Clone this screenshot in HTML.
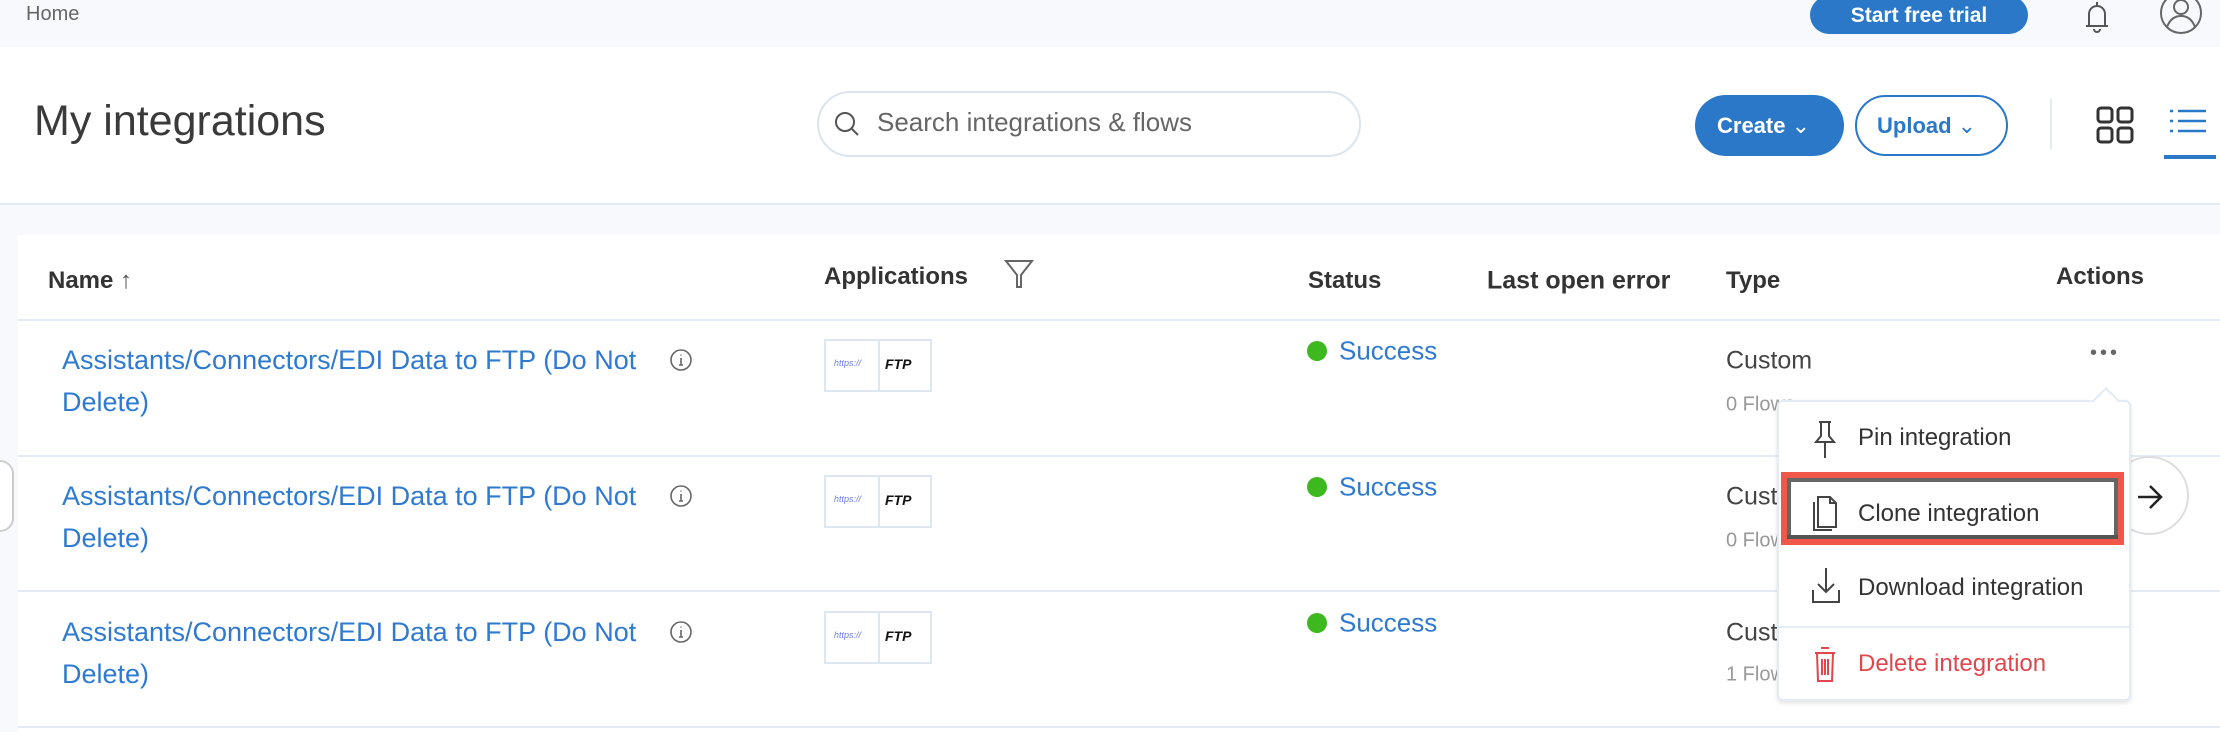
<!DOCTYPE html>
<html><head><meta charset="utf-8"><style>
*{margin:0;padding:0;box-sizing:border-box}
body{width:2220px;height:732px;overflow:hidden;background:#f7f9fc;font-family:"Liberation Sans",sans-serif;position:relative;color:#333}
.a{position:absolute;white-space:nowrap}
.hdr{font-weight:bold;font-size:24px;color:#333;transform:translateY(-50%)}
.link{color:#2f7ad0;font-size:27px;line-height:42px}
.succ{font-size:26px;color:#2f7ad0;transform:translateY(-50%)}
.dot{width:20px;height:20px;border-radius:50%;background:#3db81e}
.gray{color:#999;font-size:20px;transform:translateY(-50%)}
.cust{font-size:25px;color:#444;transform:translateY(-50%)}
.line{position:absolute;left:18px;right:0;height:2px;background:#e3ebf4}
.logo{position:absolute;width:108px;height:53px;border:2px solid #dde7f1;background:#fff}
.logo i{position:absolute;left:52px;top:0;bottom:0;width:2px;background:#dde7f1}
.logo b{position:absolute;left:59px;top:15px;font-size:14px;font-style:italic;font-weight:bold;color:#111}
.logo s{position:absolute;left:8px;top:17px;font-size:9px;font-style:italic;color:#6a7ff0;text-decoration:none}
.mi{font-size:24px;color:#333;transform:translateY(-50%)}
</style></head><body>
<div class="a" style="left:0;top:0;width:2220px;height:47px;background:#f7f9fc"></div>
<div class="a" style="left:26px;top:3px;font-size:20px;color:#666">Home</div>
<div class="a" style="left:1810px;top:-4px;width:218px;height:38px;border-radius:19px;background:#2c78c8;color:#fff;font-weight:bold;font-size:21px;text-align:center;line-height:34px;padding-top:3px">Start free trial</div>
<svg class="a" style="left:2080px;top:0" width="34" height="34" viewBox="0 0 34 34" fill="none" stroke="#555" stroke-width="2"><path d="M9 26V14a8 8 0 0 1 16 0v12H9zM6 26h22M14 29a3 3 0 0 0 6 0M17 2v4"/></svg>
<svg class="a" style="left:2158px;top:-10px" width="46" height="46" viewBox="0 0 46 46" fill="none" stroke="#666" stroke-width="2"><circle cx="23" cy="23" r="20"/><circle cx="23" cy="17" r="7"/><path d="M9 37c3-8 8-11 14-11s11 3 14 11"/></svg>

<div class="a" style="left:0;top:47px;width:2220px;height:157px;background:#fff"></div>
<div class="a" style="left:0;top:203px;width:2220px;height:2px;background:#e3ebf4"></div>
<div class="a" style="left:34px;top:97px;font-size:43px;color:#3a3a3a;font-weight:300">My integrations</div>
<div class="a" style="left:817px;top:91px;width:544px;height:66px;border:2px solid #dbe5ef;border-radius:33px;background:#fff"></div>
<svg class="a" style="left:832px;top:109px" width="30" height="30" viewBox="0 0 30 30" fill="none" stroke="#555" stroke-width="2"><circle cx="13" cy="13" r="9"/><path d="M20 20l6 6"/></svg>
<div class="a" style="left:877px;top:107px;font-size:26px;color:#666">Search integrations &amp; flows</div>
<div class="a" style="left:1695px;top:95px;width:149px;height:61px;border-radius:31px;background:#2c78c8;color:#fff;font-weight:bold;font-size:22px;line-height:61px;padding-left:22px">Create <span style="font-weight:normal">&#8964;</span></div>
<div class="a" style="left:1855px;top:95px;width:153px;height:61px;border-radius:31px;border:2px solid #2c78c8;color:#2c78c8;font-weight:bold;font-size:22px;line-height:57px;padding-left:20px">Upload <span style="font-weight:normal">&#8964;</span></div>
<div class="a" style="left:2050px;top:99px;width:2px;height:50px;background:#e3ebf4"></div>
<svg class="a" style="left:2096px;top:106px" width="38" height="38" viewBox="0 0 38 38" fill="none" stroke="#333" stroke-width="3"><rect x="2" y="2" width="14" height="14" rx="3"/><rect x="22" y="2" width="14" height="14" rx="3"/><rect x="2" y="22" width="14" height="14" rx="3"/><rect x="22" y="22" width="14" height="14" rx="3"/></svg>
<svg class="a" style="left:2168px;top:108px" width="40" height="34" viewBox="0 0 40 34" fill="none" stroke="#2c78c8" stroke-width="2.5"><path d="M2 3h3M10 3h28M2 13h3M10 13h28M2 23h3M10 23h28"/></svg>
<div class="a" style="left:2164px;top:155px;width:52px;height:4px;background:#2c78c8"></div>

<div class="a" style="left:18px;top:235px;width:2202px;height:497px;background:#fff"></div>
<div class="a" style="left:0;top:460px;width:14px;height:72px;border:2px solid #ccc;border-left:none;border-radius:0 36px 36px 0;background:#fff"></div>

<div class="a hdr" style="left:48px;top:281px">Name <span style="font-weight:normal;color:#555">&#8593;</span></div>
<div class="a hdr" style="left:824px;top:277px">Applications</div>
<svg class="a" style="left:1004px;top:259px" width="30" height="32" viewBox="0 0 30 32" fill="none" stroke="#666" stroke-width="2"><path d="M2 2h26L17 16v12h-4V16z"/></svg>
<div class="a hdr" style="left:1308px;top:281px">Status</div>
<div class="a hdr" style="left:1487px;top:281px;font-size:25px">Last open error</div>
<div class="a hdr" style="left:1726px;top:281px">Type</div>
<div class="a hdr" style="left:2056px;top:277px">Actions</div>
<div class="line" style="top:319px"></div>
<div class="line" style="top:455px"></div>
<div class="line" style="top:590px"></div>
<div class="line" style="top:726px"></div>

<div class="a link" style="left:62px;top:339px">Assistants/Connectors/EDI Data to FTP (Do Not<br>Delete)</div>
<div class="a link" style="left:62px;top:475px">Assistants/Connectors/EDI Data to FTP (Do Not<br>Delete)</div>
<div class="a link" style="left:62px;top:611px">Assistants/Connectors/EDI Data to FTP (Do Not<br>Delete)</div>
<svg class="a" style="left:669px;top:348px" width="24" height="24" viewBox="0 0 24 24" fill="none" stroke="#666" stroke-width="1.6"><circle cx="12" cy="12" r="10"/><path d="M12 10v7M10 17h4M12 6.5v1"/></svg>
<svg class="a" style="left:669px;top:484px" width="24" height="24" viewBox="0 0 24 24" fill="none" stroke="#666" stroke-width="1.6"><circle cx="12" cy="12" r="10"/><path d="M12 10v7M10 17h4M12 6.5v1"/></svg>
<svg class="a" style="left:669px;top:620px" width="24" height="24" viewBox="0 0 24 24" fill="none" stroke="#666" stroke-width="1.6"><circle cx="12" cy="12" r="10"/><path d="M12 10v7M10 17h4M12 6.5v1"/></svg>
<div class="logo" style="left:824px;top:339px"><s>https://</s><i></i><b>FTP</b></div>
<div class="logo" style="left:824px;top:475px"><s>https://</s><i></i><b>FTP</b></div>
<div class="logo" style="left:824px;top:611px"><s>https://</s><i></i><b>FTP</b></div>
<div class="a dot" style="left:1307px;top:341px"></div>
<div class="a dot" style="left:1307px;top:477px"></div>
<div class="a dot" style="left:1307px;top:613px"></div>
<div class="a succ" style="left:1339px;top:351px">Success</div>
<div class="a succ" style="left:1339px;top:487px">Success</div>
<div class="a succ" style="left:1339px;top:623px">Success</div>
<div class="a cust" style="left:1726px;top:361px">Custom</div>
<div class="a gray" style="left:1726px;top:405px">0 Flows</div>
<div class="a cust" style="left:1726px;top:497px">Custom</div>
<div class="a gray" style="left:1726px;top:541px">0 Flows</div>
<div class="a cust" style="left:1726px;top:633px">Custom</div>
<div class="a gray" style="left:1726px;top:675px">1 Flow</div>
<div class="a" style="left:2090px;top:342px;font-size:20px;color:#666;letter-spacing:3px">&#8226;&#8226;&#8226;</div>

<div class="a" style="left:2110px;top:456px;width:79px;height:79px;border-radius:50%;border:2px solid #ddd;background:#fff"></div>
<svg class="a" style="left:2136px;top:484px" width="28" height="26" viewBox="0 0 28 26" fill="none" stroke="#222" stroke-width="2.5"><path d="M2 13h23M14 2l11 11-11 11"/></svg>

<div class="a" style="left:1777px;top:400px;width:354px;height:301px;background:#fff;border:2px solid #e3ebf4;border-radius:6px;box-shadow:0 2px 4px rgba(0,0,0,.12)"></div>
<div class="a" style="left:2096px;top:391px;width:20px;height:20px;background:#fff;border-left:2px solid #e3ebf4;border-top:2px solid #e3ebf4;transform:rotate(45deg)"></div>
<svg class="a" style="left:1812px;top:420px" width="26" height="40" viewBox="0 0 26 40" fill="none" stroke="#444" stroke-width="2"><path d="M7 2h12M9 2v14l-5 6h18l-5-6V2M13 22v16"/></svg>
<div class="a mi" style="left:1858px;top:438px">Pin integration</div>
<div class="a" style="left:1781px;top:472px;width:343px;height:73px;border:6px solid #f1584a;box-shadow:inset 0 -4px 0 #555,inset 0 4px 0 #666, inset 4px 0 0 #666,inset -4px 0 0 #666"></div>
<svg class="a" style="left:1810px;top:495px" width="30" height="38" viewBox="0 0 30 38" fill="none" stroke="#444" stroke-width="2"><path d="M8 2h12l6 6v24H8zM20 2v6h6M4 7v28h18"/></svg>
<div class="a mi" style="left:1858px;top:514px">Clone integration</div>
<svg class="a" style="left:1810px;top:566px" width="32" height="40" viewBox="0 0 32 40" fill="none" stroke="#444" stroke-width="2"><path d="M16 2v24M8 18l8 8 8-8M3 24v12h26V24"/></svg>
<div class="a mi" style="left:1858px;top:588px">Download integration</div>
<div class="a" style="left:1779px;top:626px;width:350px;height:2px;background:#e3ebf4"></div>
<svg class="a" style="left:1812px;top:645px" width="26" height="40" viewBox="0 0 26 40" fill="none" stroke="#e0474c" stroke-width="2"><path d="M9 3h8M3 8h20M5 8l1 28h14l1-28M10 14v16M13 14v16M16 14v16"/></svg>
<div class="a mi" style="left:1858px;top:664px;color:#e0474c">Delete integration</div>
</body></html>
